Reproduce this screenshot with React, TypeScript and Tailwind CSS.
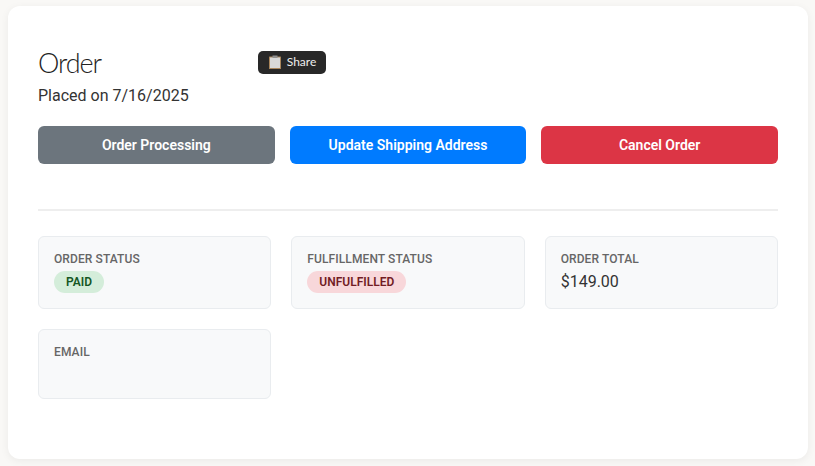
import React from "react";

const ClipboardIcon = () => (
  <svg width="14" height="14" viewBox="0 0 14 14" className="mr-[5px] shrink-0">
    <rect x="1" y="1.5" width="12" height="12.5" rx="0.5" fill="#a9865c" />
    <rect x="2" y="2.5" width="10" height="10.5" fill="#d9d9d9" />
    <rect x="4.5" y="0.5" width="5" height="2.5" fill="#8f8f8f" />
  </svg>
);

const InfoCard = ({ label, children, tall }: { label: string; children?: React.ReactNode; tall?: boolean }) => (
  <div className={`rounded-md border border-[#e9ecef] bg-[#f8f9fa] px-[15px] pt-[15px] ${tall ? "h-[70px]" : "h-[73px]"}`}>
    <div className="text-[12px] leading-[14px] font-medium tracking-[0.1px] text-[#666666] uppercase">{label}</div>
    {children}
  </div>
);

const Badge = ({ className, children }: { className: string; children: React.ReactNode }) => (
  <span className={`mt-[5px] inline-block rounded-full px-3 py-[3px] text-[12px] leading-[16px] font-semibold ${className}`}>
    {children}
  </span>
);

export default function App() {
  return (
    <div className="h-[466px] w-[815px] overflow-hidden bg-[#f9f8f6] pt-[6px] pl-2 font-['Roboto',sans-serif]">
      <div className="h-[453px] w-[800px] rounded-xl bg-white px-[30px] pt-[44px] shadow-[0_2px_8px_rgba(0,0,0,0.06)]">
        <div className="flex h-[24px] items-center">
          <h1 className="mt-[2px] w-[220px] font-['Lato',sans-serif] text-[27px] leading-[24px] font-light tracking-[-1.1px] text-[#222222]">Order</h1>
          <button className="flex h-[23px] w-[68px] items-center justify-center rounded-[5px] bg-[#282828] font-['Lato',sans-serif] text-[12px] text-[#eeeeee]">
            <ClipboardIcon />
            Share
          </button>
        </div>
        <p className="mt-[11px] text-[16px] leading-[22px] text-[#333333]">Placed on 7/16/2025</p>
        <div className="mt-[19px] grid grid-cols-3 gap-[15px]">
          <button className="h-[38px] rounded-md bg-[#6c757d] text-[14px] font-semibold text-white">Order Processing</button>
          <button className="h-[38px] rounded-md bg-[#007bff] text-[14px] font-semibold text-white">Update Shipping Address</button>
          <button className="h-[38px] rounded-md bg-[#dc3545] text-[14px] font-semibold text-white">Cancel Order</button>
        </div>
        <hr className="mt-[45px] border-t-2 border-[#eeeeee]" />
        <div className="mt-[25px] grid grid-cols-3 gap-5">
          <InfoCard label="Order Status">
            <Badge className="bg-[#d4edda] text-[#155724]">PAID</Badge>
          </InfoCard>
          <InfoCard label="Fulfillment Status">
            <Badge className="bg-[#f8d7da] text-[#721c24]">UNFULFILLED</Badge>
          </InfoCard>
          <InfoCard label="Order Total">
            <div className="mt-[6px] text-[16px] leading-[20px] text-[#333333]">$149.00</div>
          </InfoCard>
          <InfoCard label="Email" tall />
        </div>
      </div>
    </div>
  );
}
